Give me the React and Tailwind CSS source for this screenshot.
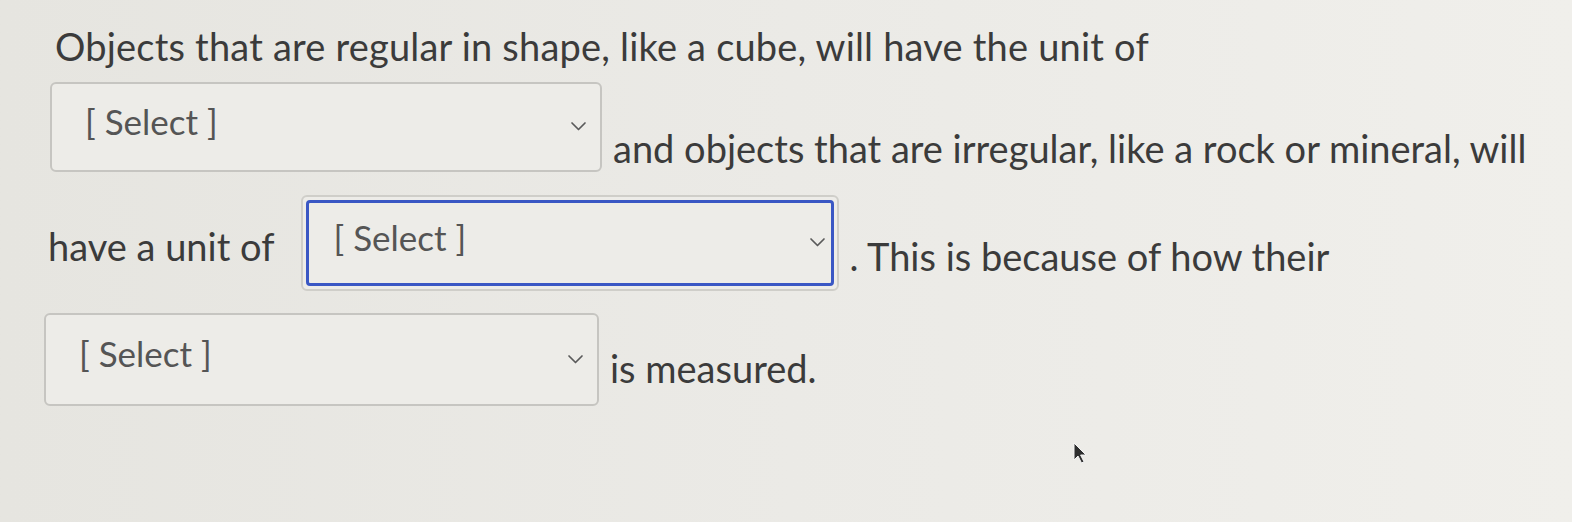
import React from "react";

const Chevron = () => (
  <svg width="17" height="11" viewBox="0 0 17 11" fill="none">
    <path d="M2 2l6.5 6.5L15 2" stroke="#5a5a5a" strokeWidth="1.7" strokeLinecap="round" strokeLinejoin="round" />
  </svg>
);

const Select = ({ className = "" }) => (
  <div
    className={`flex items-center justify-between rounded-md border-2 border-[#c6c5c1] bg-[#edece8] pl-[33px] pr-[13px] ${className}`}
  >
    <span className="text-[35px] text-[#555] pb-3">[ Select ]</span>
    <Chevron />
  </div>
);

const FocusedSelect = () => (
  <div className="w-[538px] h-[96px] rounded-md border-2 border-[#cfcec9] bg-[#edece8] p-[3px]">
    <div className="flex h-full items-center justify-between rounded-[4px] border-[3px] border-[#3a57c4] pl-[24px] pr-[5px]">
      <span className="text-[35px] text-[#555] pb-3">[ Select ]</span>
      <Chevron />
    </div>
  </div>
);

export default function App() {
  return (
    <div
      className="relative h-[522px] w-[1572px] overflow-hidden bg-gradient-to-r from-[#e6e5e0] via-[#ebeae6] to-[#f0efeb] text-[#3b3b3b]"
      style={{ fontFamily: "Lato, 'Open Sans', sans-serif" }}
    >
      <div className="pl-[50px] pt-[24px] text-[38px] leading-[1.2]">
        <p className="pl-[5px] tracking-[0.2px]">Objects that are regular in shape, like a cube, will have the unit of</p>

        <div className="mt-[12px] flex items-end gap-[11px]">
          <Select className="w-[552px] h-[90px]" />
          <span>and objects that are irregular, like a rock or mineral, will</span>
        </div>

        <div className="mt-[23px] flex items-end -ml-[2px]">
          <span className="mb-[21px] mr-[27px]">have a unit of</span>
          <FocusedSelect />
          <span className="mb-[11px] ml-[10px]">. This is because of how their</span>
        </div>

        <div className="mt-[22px] flex items-end gap-[11px] -ml-[6px]">
          <Select className="w-[555px] h-[93px]" />
          <span className="mb-[14px]">is measured.</span>
        </div>
      </div>

      <svg className="absolute left-[1072px] top-[441px]" width="16" height="24" viewBox="0 0 16 24">
        <path d="M2 2v17l4-4 3.5 7 2.5-1.2-3.4-6.8H14z" fill="#2e2e2e" stroke="#f4f4f4" strokeWidth="1" />
      </svg>
    </div>
  );
}
